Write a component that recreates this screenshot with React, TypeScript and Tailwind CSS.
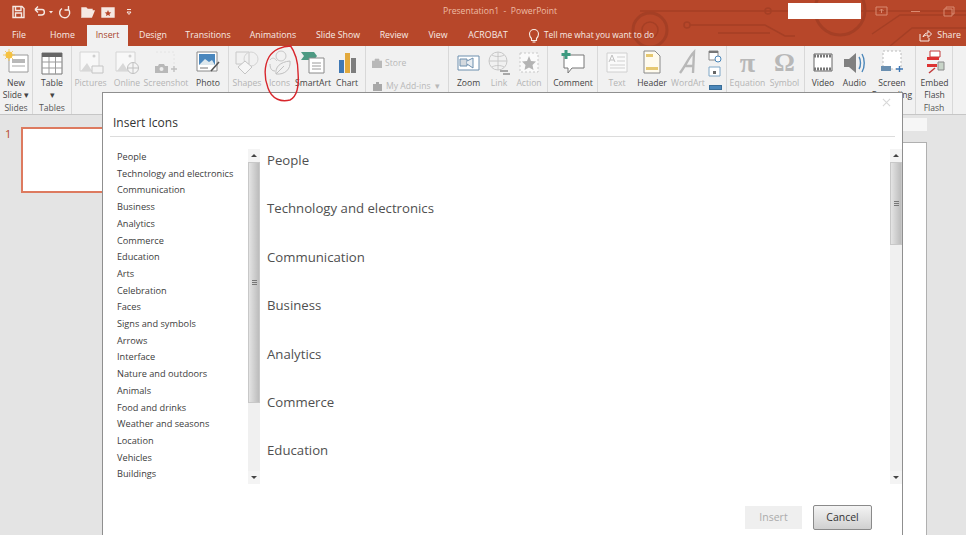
import type { ReactNode } from 'react';

const FONT = "font-['Open_Sans','Noto_Sans',sans-serif]";

const tabs = [
  { label: 'File', w: 'w-[38px]' },
  { label: 'Home', w: 'w-[49px]' },
  { label: 'Insert', w: 'w-[41px]', active: true },
  { label: 'Design', w: 'w-[50px]' },
  { label: 'Transitions', w: 'w-[60px]' },
  { label: 'Animations', w: 'w-[70px]' },
  { label: 'Slide Show', w: 'w-[60px]' },
  { label: 'Review', w: 'w-[52px]' },
  { label: 'View', w: 'w-[36px]' },
  { label: 'ACROBAT', w: 'w-[64px]' },
];

const categories = [
  'People',
  'Technology and electronics',
  'Communication',
  'Business',
  'Analytics',
  'Commerce',
  'Education',
  'Arts',
  'Celebration',
  'Faces',
  'Signs and symbols',
  'Arrows',
  'Interface',
  'Nature and outdoors',
  'Animals',
  'Food and drinks',
  'Weather and seasons',
  'Location',
  'Vehicles',
  'Buildings',
];

const sections = ['People', 'Technology and electronics', 'Communication', 'Business', 'Analytics', 'Commerce', 'Education'];

function Icon({ children, w = 26 }: { children: ReactNode; w?: number }) {
  return (
    <svg width={w} height="28" viewBox={`0 0 ${w} 28`} fill="none">
      {children}
    </svg>
  );
}

function RibbonItem({
  label,
  second,
  width,
  disabled,
  children,
}: {
  label: string;
  second?: string;
  width: string;
  disabled?: boolean;
  children: ReactNode;
}) {
  return (
    <div className={`${width} flex flex-col items-center shrink-0`}>
      <div className="h-[28px] flex items-center justify-center">{children}</div>
      <span className={`text-[8.6px] leading-[12px] whitespace-nowrap ${disabled ? 'text-[#b4b4b4]' : 'text-[#444444]'}`}>{label}</span>
      {second && <span className="text-[8.6px] leading-[12px] whitespace-nowrap text-[#444444]">{second}</span>}
    </div>
  );
}

function Group({ width, label, children }: { width: string; label?: string; children: ReactNode }) {
  return (
    <div className={`${width} shrink-0 h-full flex flex-col border-r border-[#d8d8d8]`}>
      <div className="flex-1 flex pt-[3px] min-h-0">{children}</div>
      {label && <div className="text-center text-[8.6px] leading-[11px] text-[#555555]">{label}</div>}
    </div>
  );
}

function ScrollBar({ thumb }: { thumb: string }) {
  return (
    <div className="w-[12px] h-[335px] shrink-0 bg-[#f0f0f0] flex flex-col">
      <div className="h-[13px] bg-[#f4f4f4] flex items-center justify-center">
        <div className="border-x-[3px] border-x-transparent border-b-[3px] border-b-[#444444]" />
      </div>
      <div className={`${thumb} bg-gradient-to-r from-[#e4e4e4] to-[#bcbcbc] border border-[#c8c8c8] flex flex-col items-center justify-center gap-[1px]`}>
        <div className="w-[5px] h-px bg-[#777777]" />
        <div className="w-[5px] h-px bg-[#777777]" />
        <div className="w-[5px] h-px bg-[#777777]" />
      </div>
      <div className="flex-1" />
      <div className="h-[13px] bg-[#f4f4f4] flex items-center justify-center">
        <div className="border-x-[3px] border-x-transparent border-t-[3px] border-t-[#444444]" />
      </div>
    </div>
  );
}

function TitleBar() {
  return (
    <div className="relative h-[23px] flex items-center">
      <svg className="absolute left-0 top-0" width="966" height="46" viewBox="0 0 966 46" fill="none" stroke="#a53f25" strokeWidth="1.5">
        <path d="M640 11H790M840 11H966" />
        <circle cx="768" cy="11" r="3" />
        <circle cx="650" cy="30" r="17" strokeWidth="3" />
        <circle cx="650" cy="30" r="8" />
        <circle cx="840" cy="10" r="25" strokeWidth="3" />
        <path d="M690 25H765L785 36H795M718 33H770" />
        <circle cx="687" cy="25" r="3" />
        <path d="M872 34L900 15H966M890 46L912 28H966" />
      </svg>
      <div className="relative flex items-center h-full w-full">
        <svg className="ml-[12px]" width="125" height="16" viewBox="0 0 125 16" fill="none" stroke="#f6e8e2" strokeWidth="1.4">
          <path d="M1 2.5H10L12 4.5V13.5H1Z" />
          <path d="M3.5 2.5V6.5H9V2.5M3.5 13.5V9H9.5V13.5" />
          <path d="M23 5.500H30C33 5.500 33.500 11 29.500 11H26M23 5.500L26 2.500M23 5.500L26 8.500" />
          <path d="M37 7H41L39 9.500Z" fill="#f6e8e2" stroke="none" />
          <path d="M50 4.5A5 5 0 1 0 56.5 5.5M56.5 2V6H52.5" />
          <path d="M70 13V4H74L75.5 5.5H80V7M70 13L72.500 7H82L79.500 13Z" fill="#f6e8e2" />
          <path d="M90 4H102V13H90Z" fill="#f6e8e2" />
          <path d="M96 6L97 8.200L99.300 8.400L97.500 10L98.100 12L96 11L93.900 12L94.500 10L92.700 8.400L95 8.200Z" fill="#b7472a" stroke="none" />
          <path d="M115 5.5H119M115 8H119L117 10.5Z" strokeWidth="1" />
        </svg>
        <span className="absolute left-[443px] top-[4px] text-[8.6px] leading-[14px] text-[#eebda6] whitespace-nowrap">Presentation1 &nbsp;-&nbsp; PowerPoint</span>
        <div className="absolute left-[788px] top-[3px] w-[73px] h-[16px] bg-white" />
        <svg className="absolute left-[874px] top-[4px]" width="85" height="14" viewBox="0 0 85 14" fill="none" stroke="#d98a70" strokeWidth="1">
          <path d="M2 3H13V11H2ZM7.500 9V5M5.500 7L7.500 5L9.500 7" />
          <path d="M37 7.500H46" />
          <path d="M70 5H78V12H70ZM72 5V3H80V10H78" />
        </svg>
      </div>
    </div>
  );
}

function TabBar() {
  return (
    <div className="relative h-[23px] flex items-end text-[8.8px] text-[#f8ebe5]">
      {tabs.map((t) => (
        <div
          key={t.label}
          className={`${t.w} h-[21px] flex items-center justify-center whitespace-nowrap ${t.active ? 'bg-[#f1f1f1] text-[#a8452c]' : ''}`}
        >
          {t.label}
        </div>
      ))}
      <div className="ml-[8px] h-[21px] flex items-center gap-[4px] whitespace-nowrap">
        <svg width="12" height="15" viewBox="0 0 12 15" fill="none" stroke="#f8ebe5" strokeWidth="1.1">
          <path d="M3.5 10.5C2 9 1.5 7.5 1.5 6A4.5 4.5 0 0 1 10.5 6C10.5 7.5 10 9 8.5 10.5V12.5H3.5Z" />
          <path d="M4.5 14H7.5" />
        </svg>
        <span className="text-[8.4px]">Tell me what you want to do</span>
      </div>
      <div className="ml-auto mr-[5px] h-[21px] flex items-center gap-[5px]">
        <svg width="13" height="13" viewBox="0 0 13 13" fill="none" stroke="#f8ebe5" strokeWidth="1">
          <path d="M1 5V12H10V9M4 8C4.5 5.5 6.5 4 9 4V1.5L12.5 5L9 8.5V6C7 6 5 6.5 4 8Z" />
        </svg>
        Share
      </div>
    </div>
  );
}

function Ribbon() {
  return (
    <div className="h-[69px] bg-[#f1f1f1] border-b border-[#c6c6c6] flex">
      <Group width="w-[33px]" label="Slides">
        <RibbonItem label="New" second="Slide ▾" width="w-[32px]">
          <Icon w={27}>
            <path d="M6 6H25V23H6Z" fill="#fff" stroke="#9a9a9a" />
            <path d="M9 10H22V14H9Z" fill="#b8b8b8" />
            <path d="M9 16H22V18H9Z" fill="#d2d2d2" />
            <circle cx="6" cy="6" r="3.5" fill="#f5c242" />
            <path d="M6 0V12M0 6H12M2 2L10 10M10 2L2 10" stroke="#f5c242" strokeWidth=".8" />
          </Icon>
        </RibbonItem>
      </Group>
      <Group width="w-[39px]" label="Tables">
        <RibbonItem label="Table" second="▾" width="w-[38px]">
          <Icon w={24}>
            <path d="M2 4H22V25H2Z" fill="#fff" stroke="#777777" />
            <path d="M2 4H22V8H2Z" fill="#666666" />
            <path d="M2 13H22M2 19H22M9 8V25M15.5 8V25" stroke="#9b9b9b" />
          </Icon>
        </RibbonItem>
      </Group>
      <Group width="w-[157px]">
        <RibbonItem label="Pictures" width="w-[37px]" disabled>
          <Icon w={26}>
            <path d="M2 3H21V22H2Z" fill="#f8f8f8" stroke="#d4d4d4" />
            <path d="M3 22L9 14L14 22Z" fill="#d8d8d8" />
            <path d="M14 17H25V24H14Z" fill="#f4f4f4" stroke="#c4c4c4" />
            <circle cx="16" cy="7" r="1.5" fill="#d0d0d0" />
          </Icon>
        </RibbonItem>
        <RibbonItem label="Online" width="w-[36px]" disabled>
          <Icon w={26}>
            <path d="M2 3H21V22H2Z" fill="#f8f8f8" stroke="#d4d4d4" />
            <path d="M3 22L9 14L14 22Z" fill="#d8d8d8" />
            <circle cx="19" cy="19" r="5.5" fill="#f4f4f4" stroke="#c0c0c0" />
            <path d="M13.5 19H24.5M19 13.5V24.5" stroke="#c0c0c0" />
            <circle cx="16" cy="7" r="1.5" fill="#d0d0d0" />
          </Icon>
        </RibbonItem>
        <RibbonItem label="Screenshot" width="w-[42px]" disabled>
          <Icon w={26}>
            <path d="M3 3H21V16" stroke="#e4e4e4" strokeDasharray="2 2" />
            <path d="M2 17H5L6 15H11L12 17H15V24H2Z" fill="#b8b8b8" />
            <circle cx="8.5" cy="20" r="2" fill="#eeeeee" />
            <path d="M18 20H24M21 17V23" stroke="#c0c0c0" strokeWidth="1.4" />
          </Icon>
        </RibbonItem>
        <RibbonItem label="Photo" width="w-[42px]">
          <Icon w={26}>
            <path d="M2 3H22V22H2Z" fill="#fff" stroke="#8a8a8a" />
            <path d="M4 5H20V16H4Z" fill="#4a87bd" />
            <path d="M4 16L10 10L14 13L17 11L20 16Z" fill="#dde8ee" />
            <path d="M5 19H13" stroke="#777777" />
            <path d="M16 22L24 13" stroke="#555555" strokeWidth="1.6" />
          </Icon>
        </RibbonItem>
      </Group>
      <Group width="w-[137px]">
        <RibbonItem label="Shapes" width="w-[36px]" disabled>
          <Icon w={26}>
            <path d="M2 3H15V15H2Z" stroke="#c8c8c8" />
            <circle cx="17" cy="10" r="7" stroke="#d4d4d4" />
            <path d="M11 12L18 18L11 25L4 18Z" fill="#f6f6f6" stroke="#c4c4c4" />
          </Icon>
        </RibbonItem>
        <RibbonItem label="Icons" width="w-[29px]" disabled>
          <Icon w={26}>
            <circle cx="14" cy="7" r="5" stroke="#c8c8c8" />
            <path d="M3 11C5 8 8 9 10 12" stroke="#c8c8c8" />
            <path d="M9 25C8 18 13 13 23 12C24 20 18 26 9 25ZM9 25L17 17M3 15C3 20 5 22 8 22" stroke="#c0c0c0" />
          </Icon>
        </RibbonItem>
        <RibbonItem label="SmartArt" width="w-[38px]">
          <Icon w={26}>
            <path d="M1 3H14L17 7L14 11H1L4 7Z" fill="#4d9a83" />
            <path d="M9 9H24V24H9Z" fill="#fff" stroke="#8a8a8a" />
            <path d="M12 14H21M12 17H21M12 20H21" stroke="#9a9a9a" />
          </Icon>
        </RibbonItem>
        <RibbonItem label="Chart" width="w-[30px]">
          <Icon w={20}>
            <path d="M2 11H7V24H2Z" fill="#3f78b5" />
            <path d="M8 4H13V24H8Z" fill="#e2a93c" />
            <path d="M14 9H19V24H14Z" fill="#7d7d7d" />
          </Icon>
        </RibbonItem>
      </Group>
      <Group width="w-[83px]">
        <div className="pl-[6px] pt-[8px] flex flex-col gap-[11px] text-[8.6px] leading-[12px] text-[#b8b8b8]">
          <div className="flex items-center gap-[3px]">
            <svg width="10" height="10" viewBox="0 0 10 10">
              <path d="M0 3H10V10H0ZM3 3V1H7V3" fill="#b8b8b8" stroke="#b8b8b8" strokeWidth=".6" />
            </svg>
            Store
          </div>
          <div className="flex items-center gap-[3px] whitespace-nowrap">
            <svg width="11" height="11" viewBox="0 0 11 11">
              <path d="M1 3H4V1H7V3H10V10H1Z" fill="#a8a8a8" />
            </svg>
            My Add-ins &nbsp;▾
          </div>
        </div>
      </Group>
      <Group width="w-[99px]">
        <div className="w-[4px] shrink-0" />
        <RibbonItem label="Zoom" width="w-[31px]">
          <Icon w={24}>
            <path d="M1 7H22V21H1Z" fill="#fff" stroke="#6d8fae" />
            <path d="M3 10H10V17H3Z" fill="#d4d9de" stroke="#6d8fae" />
            <path d="M10 12L16 9V19L10 15" fill="#e8edf2" stroke="#6d8fae" />
          </Icon>
        </RibbonItem>
        <RibbonItem label="Link" width="w-[30px]" disabled>
          <Icon w={24}>
            <circle cx="11" cy="12" r="9" stroke="#c8c8c8" />
            <path d="M2 12H20M11 3V21M5 6C8 8 14 8 17 6M5 18C8 16 14 16 17 18" stroke="#c8c8c8" />
            <path d="M13 22H21M16 25H23" stroke="#a8a8a8" strokeWidth="2" />
          </Icon>
        </RibbonItem>
        <RibbonItem label="Action" width="w-[30px]" disabled>
          <Icon w={22}>
            <path d="M2 4H20V23H2Z" fill="#fafafa" stroke="#c8c8c8" strokeDasharray="2 2" />
            <path d="M11 7L13 12L18 12.5L14.5 16L15.5 21L11 18.5L6.5 21L7.5 16L4 12.5L9 12Z" fill="#b4b4b4" />
          </Icon>
        </RibbonItem>
      </Group>
      <Group width="w-[50px]">
        <RibbonItem label="Comment" width="w-[50px]">
          <Icon w={24}>
            <path d="M3 6H23V19H11L7 24V19H3Z" fill="#fff" stroke="#777777" />
            <path d="M5 1V10M0.5 5.500H9.500" stroke="#3d9a80" strokeWidth="3" />
          </Icon>
        </RibbonItem>
      </Group>
      <Group width="w-[129px]">
        <RibbonItem label="Text" width="w-[38px]" disabled>
          <Icon w={24}>
            <path d="M2 4H22V23H2Z" fill="#fafafa" stroke="#d0d0d0" />
            <path d="M4 13L7 6L10 13M5 11H9" stroke="#c0c0c0" />
            <path d="M12 8H20M12 12H20M5 16H20M5 19H20" stroke="#d0d0d0" />
          </Icon>
        </RibbonItem>
        <RibbonItem label="Header" width="w-[32px]">
          <Icon w={20}>
            <path d="M2 2H13L18 7V24H2Z" fill="#fffbee" stroke="#8a8a8a" />
            <path d="M4 5H11V8H4Z" fill="#e6c870" />
            <path d="M4 18H16V21H4Z" fill="#e6c870" />
          </Icon>
        </RibbonItem>
        <RibbonItem label="WordArt" width="w-[40px]" disabled>
          <Icon w={20}>
            <path d="M2 24C8 16 11 8 16 3L15 24M7 17H15" stroke="#b8b8b8" strokeWidth="2.4" />
          </Icon>
        </RibbonItem>
        <div className="flex flex-col gap-[3px] pt-[1px]">
          <svg width="14" height="32" viewBox="0 0 14 32" fill="none">
            <path d="M1 1H10V10H1Z" fill="#fff" stroke="#8a8a8a" />
            <path d="M1 1H10V3H1Z" fill="#777777" />
            <circle cx="10" cy="9" r="3" fill="#fff" stroke="#4b87ba" />
            <path d="M1 17H12V26H1Z" fill="#fff" stroke="#7fa6c6" />
            <path d="M5 21H8V24H5Z" fill="#666666" />
          </svg>
          <div className="w-[13px] h-[5px] ml-px bg-[#4b87ba] border border-[#3a6e98]" />
        </div>
      </Group>
      <Group width="w-[78px]">
        <div className="w-[41px] flex flex-col items-center">
          <div className="h-[28px] flex items-center justify-center font-['Liberation_Serif',serif] font-bold text-[28px] leading-[28px] text-[#b8b8b8]">π</div>
          <span className="text-[8.6px] leading-[12px] text-[#b4b4b4]">Equation</span>
        </div>
        <div className="w-[33px] flex flex-col items-center">
          <div className="h-[28px] flex items-center justify-center font-['Liberation_Serif',serif] font-bold text-[26px] leading-[28px] text-[#b8b8b8]">Ω</div>
          <span className="text-[8.6px] leading-[12px] text-[#b4b4b4]">Symbol</span>
        </div>
      </Group>
      <Group width="w-[111px]">
        <RibbonItem label="Video" width="w-[36px]">
          <Icon w={22}>
            <path d="M2 5H20V22H2Z" fill="#fff" stroke="#666666" />
            <path d="M2 7H20M2 20H20" stroke="#777777" strokeWidth="3" strokeDasharray="2 1" />
          </Icon>
        </RibbonItem>
        <RibbonItem label="Audio" width="w-[27px]">
          <Icon w={24}>
            <path d="M1 10H6L13 4V24L6 18H1Z" fill="#808080" />
            <path d="M16 8C18 11 18 17 16 20M19 5C22 10 22 18 19 23" stroke="#4b87ba" strokeWidth="1.4" />
          </Icon>
        </RibbonItem>
        <RibbonItem label="Screen" second="Recording" width="w-[48px]">
          <Icon w={24}>
            <path d="M3 2H21V20H3Z" fill="#fff" stroke="#bbbbbb" strokeDasharray="2 2" />
            <path d="M1 17H11V22H1Z" fill="#6a8fb0" />
            <path d="M16 20H23M19.500 17V23" stroke="#3f78b5" strokeWidth="1.4" />
          </Icon>
        </RibbonItem>
      </Group>
      <Group width="w-[37px]" label="Flash">
        <RibbonItem label="Embed" second="Flash" width="w-[37px]">
          <Icon w={22}>
            <path d="M6 2H16V8H6Z" fill="#fff" stroke="#c23b3b" />
            <path d="M3 8H15V11H3Z" fill="#d33" />
            <path d="M14 13H20V21H14Z" fill="#c8d4c8" stroke="#8a8a8a" />
            <path d="M3 15H13V18H3Z" fill="#d33" />
            <path d="M5 24L11 19" stroke="#c23b3b" strokeWidth="1.5" />
          </Icon>
        </RibbonItem>
      </Group>
      <div className="flex-1 bg-[#f1f1f1]" />
    </div>
  );
}

function InsertIconsDialog() {
  return (
    <div className="absolute left-[102px] top-[92px] w-[801px] h-[443px] bg-white border border-[#8f8f8f] border-b-0 flex flex-col">
      <div className="relative mx-[7px] h-[44px] border-b border-[#dcdcdc] flex items-end pb-[4px]">
        <span className="ml-[3px] text-[12px] leading-[18px] text-[#333333]">Insert Icons</span>
        <svg className="absolute right-[4px] top-[5px]" width="9" height="9" viewBox="0 0 10 10" stroke="#d8d8d8" strokeWidth="1.2">
          <path d="M1 1L9 9M9 1L1 9" />
        </svg>
      </div>
      <div className="flex pt-[12px]">
        <div className="w-[145px] shrink-0 pl-[14px]">
          {categories.map((c) => (
            <div key={c} className="text-[9.2px] leading-[16.7px] text-[#3c3c3c] whitespace-nowrap">
              {c}
            </div>
          ))}
        </div>
        <ScrollBar thumb="h-[241px]" />
        <div className="flex-1 pl-[7px] flex flex-col gap-[26.4px]">
          {sections.map((s) => (
            <div key={s} className="text-[13.2px] leading-[22px] text-[#505050]">
              {s}
            </div>
          ))}
        </div>
        <ScrollBar thumb="h-[83px]" />
      </div>
      <div className="flex justify-end items-center gap-[11px] pr-[30px] pt-[21px]">
        <div className="w-[57px] h-[23px] bg-[#efefef] flex items-center justify-center text-[10.5px] text-[#ababab]">Insert</div>
        <div className="w-[59px] h-[25px] rounded-[2px] border border-[#8a8a8a] bg-gradient-to-b from-[#f4f4f4] to-[#d0d0d0] flex items-center justify-center text-[10.5px] text-[#333333]">Cancel</div>
      </div>
    </div>
  );
}

export default function App() {
  return (
    <div className={`${FONT} relative w-[966px] h-[535px] overflow-hidden bg-[#e4e4e4]`}>
      <div className="bg-[#b7472a]">
        <TitleBar />
        <TabBar />
      </div>
      <Ribbon />
      <div className="flex h-[420px]">
        <div className="w-[120px] shrink-0 pt-[12px] flex">
          <span className="ml-[5px] w-[16px] text-[11px] leading-[14px] text-[#b7472a]">1</span>
          <div className="w-[90px] h-[66px] bg-white border-2 border-[#dd7a5f]" />
        </div>
        <div className="flex-1 flex flex-col items-end pr-[39px]">
          <div className="h-[13px] w-[24px] mt-[3px] bg-[#f6f6f6]" />
          <div className="mt-[11px] w-full flex-1 bg-white border border-[#b0b0b0] border-b-0" />
        </div>
      </div>
      <InsertIconsDialog />
      {/* hand-drawn circle around the Icons button */}
      <svg className="absolute left-[258px] top-[40px]" width="48" height="66" viewBox="0 0 48 66" fill="none" stroke="#d8262c" strokeWidth="1.4">
        <path d="M32 5C37 12 40 22 40 32C41 44 40 56 32 60C24 62 14 60 10 48C6 38 6 26 11 17C15 10 24 6 33 6" />
      </svg>
    </div>
  );
}
